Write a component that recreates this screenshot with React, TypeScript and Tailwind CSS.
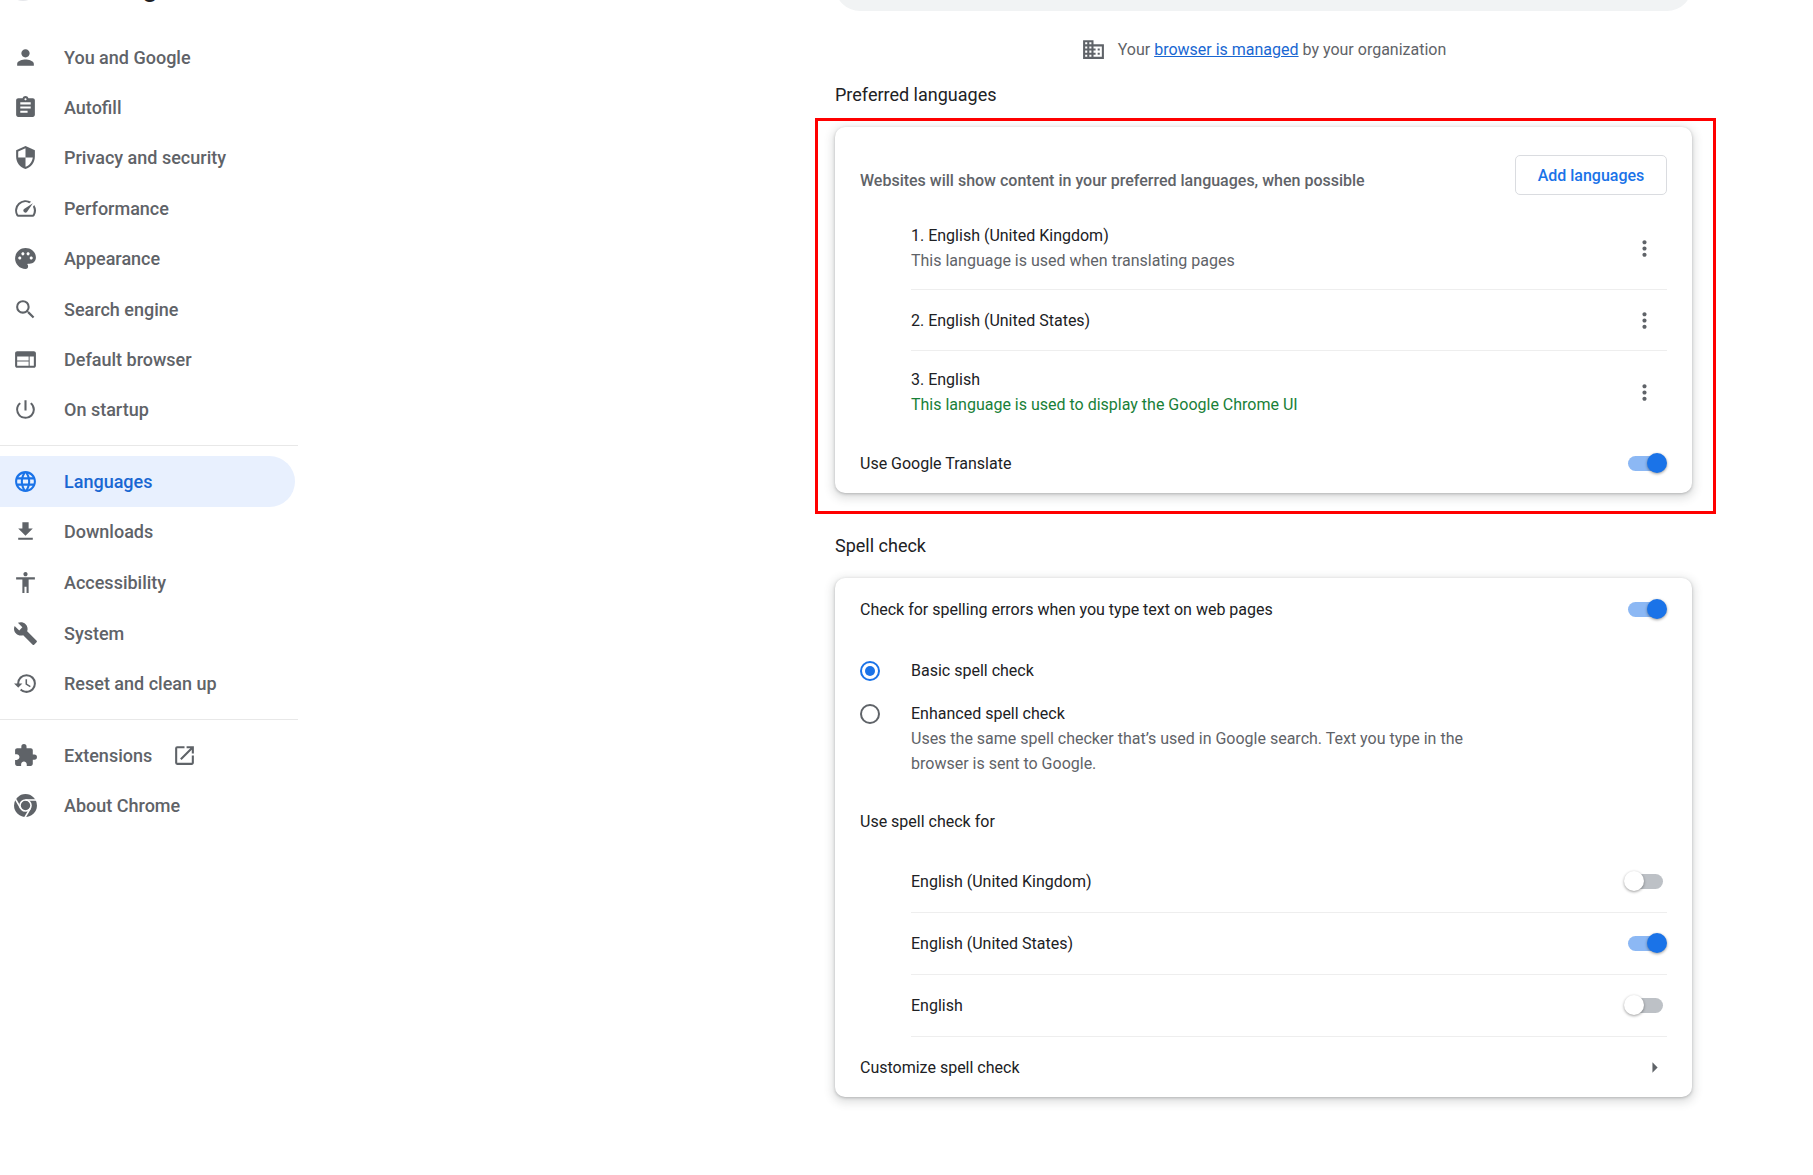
import { useState } from "react";
import type { ReactNode } from "react";
import type { IconType } from "react-icons";
import {
  MdAccessibility,
  MdAssignment,
  MdBuild,
  MdDomain,
  MdExtension,
  MdHistory,
  MdLanguage,
  MdMoreVert,
  MdOpenInNew,
  MdPalette,
  MdPerson,
  MdPowerSettingsNew,
  MdSearch,
  MdSecurity,
  MdSpeed,
  MdWeb,
} from "react-icons/md";

function DownloadIcon({ className }: { className?: string }) {
  return (
    <svg viewBox="0 0 24 24" fill="currentColor" aria-hidden="true" className={className}>
      <path d="M19 9h-4V3H9v6H5l7 7 7-7zM5 18v2h14v-2H5z" />
    </svg>
  );
}

function ChromeIcon({ className }: { className?: string }) {
  return (
    <svg viewBox="0 0 24 24" aria-hidden="true" className={className}>
      <circle cx="12" cy="12" r="11" fill="currentColor" />
      <circle cx="12" cy="12" r="5.3" fill="currentColor" stroke="#ffffff" strokeWidth="1.5" />
      <g stroke="#ffffff" strokeWidth="1.5">
        <path d="M12 6.7h12" />
        <path d="M12 6.7h12" transform="rotate(120 12 12)" />
        <path d="M12 6.7h12" transform="rotate(240 12 12)" />
      </g>
    </svg>
  );
}

type NavEntry = {
  label: string;
  icon: IconType | typeof DownloadIcon;
  selected?: boolean;
  external?: boolean;
};

const mainEntries: NavEntry[] = [
  { label: "You and Google", icon: MdPerson },
  { label: "Autofill", icon: MdAssignment },
  { label: "Privacy and security", icon: MdSecurity },
  { label: "Performance", icon: MdSpeed },
  { label: "Appearance", icon: MdPalette },
  { label: "Search engine", icon: MdSearch },
  { label: "Default browser", icon: MdWeb },
  { label: "On startup", icon: MdPowerSettingsNew },
];

const advancedEntries: NavEntry[] = [
  { label: "Languages", icon: MdLanguage, selected: true },
  { label: "Downloads", icon: DownloadIcon },
  { label: "Accessibility", icon: MdAccessibility },
  { label: "System", icon: MdBuild },
  { label: "Reset and clean up", icon: MdHistory },
];

const extraEntries: NavEntry[] = [
  { label: "Extensions", icon: MdExtension, external: true },
  { label: "About Chrome", icon: ChromeIcon },
];

function NavGroup({ entries, className }: { entries: NavEntry[]; className: string }) {
  return (
    <ul className={`grid auto-rows-fr ${className}`}>
      {entries.map(({ label, icon: Icon, selected, external }) => (
        <li key={label} className="flex pr-[3px]">
          <a
            href="#"
            aria-current={selected ? "page" : undefined}
            className={`flex flex-1 items-center rounded-r-full pl-[13px] text-[18px] font-medium ${
              selected ? "bg-[#e8f0fe] text-[#1967d2]" : "text-[#5f6368]"
            }`}
          >
            <Icon className={`size-[25px] shrink-0 ${selected ? "text-[#1a73e8]" : "text-[#5f6368]"}`} />
            <span className="ml-[26px]">{label}</span>
            {external && <MdOpenInNew className="ml-5 size-[25px]" />}
          </a>
        </li>
      ))}
    </ul>
  );
}

function Toggle({ label, initial }: { label: string; initial: boolean }) {
  const [on, setOn] = useState(initial);
  return (
    <input
      type="checkbox"
      role="switch"
      aria-label={label}
      checked={on}
      onChange={() => setOn(!on)}
      className="relative mx-1 h-[15px] w-[35px] shrink-0 cursor-pointer appearance-none rounded-full bg-[#bdc1c6] before:absolute before:-top-[3px] before:-left-1 before:size-5 before:rounded-full before:bg-white before:shadow-[0_1px_3px_rgba(0,0,0,0.4)] before:content-[''] checked:bg-[#8cb8f4] checked:before:left-[19px] checked:before:bg-[#1a73e8]"
    />
  );
}

function Radio({
  id,
  title,
  note,
  checked,
  onSelect,
}: {
  id: string;
  title: string;
  note?: string;
  checked: boolean;
  onSelect: () => void;
}) {
  return (
    <div className="flex items-start">
      <span className="flex h-[25px] w-[51px] shrink-0 items-center">
        <input
          type="radio"
          name="spell-check-mode"
          id={id}
          checked={checked}
          onChange={onSelect}
          className="flex size-5 appearance-none items-center justify-center rounded-full border-2 border-[#5f6368] before:size-[10px] before:rounded-full checked:border-[#1a73e8] checked:before:bg-[#1a73e8] checked:before:content-['']"
        />
      </span>
      <label htmlFor={id} className="max-w-[600px]">
        <span className="block">{title}</span>
        {note && <span className="block text-[#5f6368]">{note}</span>}
      </label>
    </div>
  );
}

function Card({ children }: { children: ReactNode }) {
  return (
    <div className="rounded-[10px] bg-white px-[25px] text-[16px] leading-[25px] text-[#202124] shadow-[0_1px_3px_0_rgba(60,64,67,0.3),0_3px_8px_3px_rgba(60,64,67,0.15)]">
      {children}
    </div>
  );
}

const languages = [
  { name: "1. English (United Kingdom)", note: "This language is used when translating pages", tone: "text-[#5f6368]" },
  { name: "2. English (United States)" },
  { name: "3. English", note: "This language is used to display the Google Chrome UI", tone: "text-[#188038]" },
];

const dictionaries = [
  { name: "English (United Kingdom)", on: false },
  { name: "English (United States)", on: true },
  { name: "English", on: false },
];

export default function App() {
  const [mode, setMode] = useState("basic");

  return (
    <div className="flex min-h-screen overflow-hidden bg-white font-['Roboto',sans-serif]">
      <aside className="w-[298px] shrink-0">
        <header className="-mt-[38px] flex h-[70px] items-start pl-2">
          <span className="mt-[9px] size-[30px] rounded-full border-[9px] border-gray-200 bg-gray-300" />
          <h1 className="ml-[31px] text-[28px] leading-[50px] font-medium text-[#202124]">Settings</h1>
        </header>
        <nav aria-label="Settings sections">
          <NavGroup entries={mainEntries} className="min-h-[403px]" />
          <hr className="my-[10px] border-[#e8e8e8]" />
          <NavGroup entries={advancedEntries} className="min-h-[253px]" />
          <hr className="my-[10px] border-[#e8e8e8]" />
          <NavGroup entries={extraEntries} className="min-h-[101px]" />
        </nav>
      </aside>

      <main className="flex flex-1 justify-end pr-[121px]">
        <div className="w-full max-w-[857px]">
          <input
            type="search"
            aria-label="Search settings"
            className="-mt-[39px] block h-[50px] w-full rounded-full bg-[#f1f3f4] px-12 outline-none"
          />

          <p className="mt-[26px] flex items-center justify-center text-[16px] leading-[25px] text-[#5f6368]">
            <MdDomain className="mr-3 size-[25px]" />
            <span>
              Your{" "}
              <a href="#" className="text-[#1967d2] underline">
                browser is managed
              </a>{" "}
              by your organization
            </span>
          </p>

          <section>
            <h2 className="mt-5 text-[18px] leading-[25px] text-[#202124]">Preferred languages</h2>
            <div className="relative mt-5">
              <Card>
                <div className="flex items-start justify-between pt-7 pb-3">
                  <h3 className="pt-[13px] text-[16px] font-medium text-[#5f6368]">
                    Websites will show content in your preferred languages, when possible
                  </h3>
                  <button
                    type="button"
                    className="h-10 w-[152px] rounded-[5px] border border-[#dadce0] text-[16px] font-medium text-[#1a73e8]"
                  >
                    Add languages
                  </button>
                </div>
                <ul className="ml-[51px] divide-y divide-[#eeeeee]">
                  {languages.map(({ name, note, tone }) => (
                    <li
                      key={name}
                      className={`flex items-center justify-between ${
                        note ? "min-h-[83px] last:min-h-[82px]" : "min-h-[61px]"
                      }`}
                    >
                      <div>
                        <div>{name}</div>
                        {note && <div className={tone}>{note}</div>}
                      </div>
                      <button
                        type="button"
                        aria-label={`More actions for ${name}`}
                        className="flex size-[45px] items-center justify-center rounded-full text-[#5f6368]"
                      >
                        <MdMoreVert className="size-[25px]" />
                      </button>
                    </li>
                  ))}
                </ul>
                <div className="flex min-h-[60px] items-center justify-between">
                  <span>Use Google Translate</span>
                  <Toggle label="Use Google Translate" initial />
                </div>
              </Card>
              <div className="pointer-events-none absolute -top-[9px] -right-6 -bottom-[21px] -left-5 border-3 border-[#ff0000]" />
            </div>
          </section>

          <section>
            <h2 className="mt-10 text-[18px] leading-[25px] text-[#202124]">Spell check</h2>
            <div className="mt-5">
              <Card>
                <div className="flex min-h-[62px] items-center justify-between">
                  <span>Check for spelling errors when you type text on web pages</span>
                  <Toggle label="Check for spelling errors when you type text on web pages" initial />
                </div>
                <div role="radiogroup" aria-label="Spell check mode" className="flex flex-col gap-[18px] pt-[18px] pb-[15px]">
                  <Radio
                    id="basic"
                    title="Basic spell check"
                    checked={mode === "basic"}
                    onSelect={() => setMode("basic")}
                  />
                  <Radio
                    id="enhanced"
                    title="Enhanced spell check"
                    note="Uses the same spell checker that’s used in Google search. Text you type in the browser is sent to Google."
                    checked={mode === "enhanced"}
                    onSelect={() => setMode("enhanced")}
                  />
                </div>
                <h3 className="flex min-h-[60px] items-center">Use spell check for</h3>
                <ul className="ml-[51px]">
                  {dictionaries.map(({ name, on }) => (
                    <li
                      key={name}
                      className="flex min-h-[62px] items-center justify-between border-b border-[#eeeeee]"
                    >
                      <span>{name}</span>
                      <Toggle label={name} initial={on} />
                    </li>
                  ))}
                </ul>
                <button type="button" className="flex min-h-[60px] w-full items-center justify-between text-left">
                  <span>Customize spell check</span>
                  <svg viewBox="0 0 24 24" fill="#5f6368" aria-hidden="true" className="size-[25px]">
                    <path d="M10 17l5-5-5-5z" />
                  </svg>
                </button>
              </Card>
            </div>
          </section>
        </div>
      </main>
    </div>
  );
}
